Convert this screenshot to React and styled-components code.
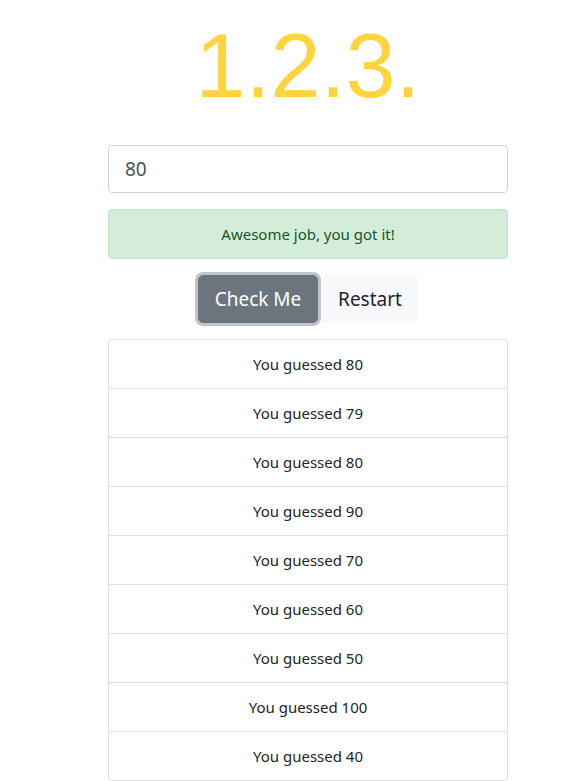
import React from 'react';
import styled, { createGlobalStyle } from 'styled-components';

const GlobalStyle = createGlobalStyle`
    body {
        margin: 0;
        background: #fff;
        font-family: 'Noto Sans', 'Open Sans', sans-serif;
        color: #212529;
    }
`;

const Page = styled.div`
    width: 400px;
    margin-left: 108px;
    display: flex;
    flex-direction: column;
`;

const Title = styled.h1`
    margin: 0;
    padding-top: 12px;
    font-family: 'Liberation Sans', Arial, sans-serif;
    font-weight: 400;
    font-size: 90px;
    line-height: 108px;
    color: #ffd43f;
    text-align: center;
`;

const GuessInput = styled.input`
    box-sizing: border-box;
    margin-top: 25px;
    width: 100%;
    height: 48px;
    padding: 8px 16px;
    font-family: 'Noto Sans', sans-serif;
    font-size: 19px;
    color: #495057;
    border: 1px solid #ced4da;
    border-radius: 4px;
    outline: none;
`;

const Alert = styled.div`
    box-sizing: border-box;
    margin-top: 16px;
    height: 50px;
    display: flex;
    align-items: center;
    justify-content: center;
    font-size: 15px;
    color: #155724;
    background: #d4edda;
    border: 1px solid #c3e6cb;
    border-radius: 4px;
`;

const ButtonRow = styled.div`
    margin-top: 16px;
    display: flex;
    justify-content: center;
    gap: 4px;
`;

const Button = styled.button`
    box-sizing: border-box;
    width: ${({ $w }) => $w}px;
    height: 48px;
    padding: 0;
    font-family: 'Noto Sans', sans-serif;
    font-size: 19px;
    border-radius: 5px;
    border: 1px solid ${({ $dark }) => ($dark ? '#6c757d' : '#f8f9fa')};
    background: ${({ $dark }) => ($dark ? '#6c757d' : '#f8f9fa')};
    color: ${({ $dark }) => ($dark ? '#fff' : '#212529')};
    box-shadow: ${({ $dark }) => ($dark ? '0 0 0 3px rgba(130, 138, 145, 0.5)' : 'none')};
`;

const List = styled.ul`
    margin: 16px 0 0;
    padding: 0;
    list-style: none;
    border: 1px solid rgba(0, 0, 0, 0.125);
    border-radius: 4px;
`;

const Item = styled.li`
    height: 48px;
    display: flex;
    align-items: center;
    justify-content: center;
    font-size: 15px;
    color: #212529;
    & + & {
        border-top: 1px solid rgba(0, 0, 0, 0.125);
    }
`;

const guesses = [80, 79, 80, 90, 70, 60, 50, 100, 40];

const App = () => (
    <>
        <GlobalStyle />
        <Page>
            <Title>1.2.3.</Title>
            <GuessInput defaultValue="80" />
            <Alert>Awesome job, you got it!</Alert>
            <ButtonRow>
                <Button $dark $w={120}>Check Me</Button>
                <Button $w={96}>Restart</Button>
            </ButtonRow>
            <List>
                {guesses.map((g, i) => (
                    <Item key={i}>You guessed {g}</Item>
                ))}
            </List>
        </Page>
    </>
);

export default App;
